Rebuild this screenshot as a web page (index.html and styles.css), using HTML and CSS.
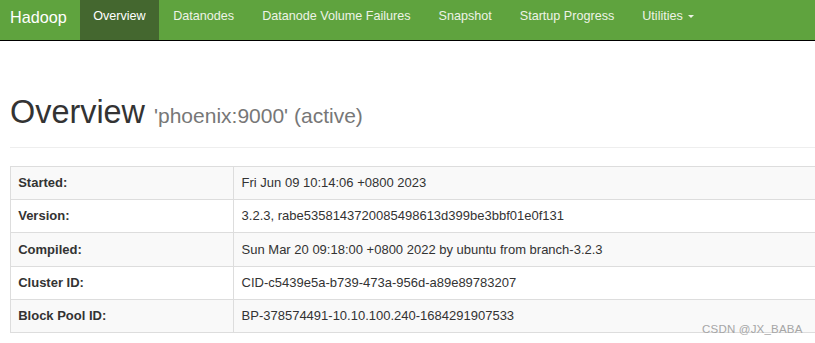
FILE: index.html
```html
<!DOCTYPE html>
<html lang="en">
<head>
    <meta charset="UTF-8">
    <title>Namenode information</title>
    <link rel="stylesheet" href="styles.css">
</head>
<body>
    <nav class="navbar">
        <a class="navbar-brand" href="#">Hadoop</a>
        <ul class="navbar-nav">
            <li class="active"><a href="#">Overview</a></li>
            <li><a href="#">Datanodes</a></li>
            <li><a href="#">Datanode Volume Failures</a></li>
            <li><a href="#">Snapshot</a></li>
            <li><a href="#">Startup Progress</a></li>
            <li><a href="#">Utilities <span class="caret"></span></a></li>
        </ul>
    </nav>

    <div class="container">
        <div class="page-header">
            <h1>Overview <small>'phoenix:9000' (active)</small></h1>
        </div>

        <table class="table">
            <tr><th>Started:</th><td>Fri Jun 09 10:14:06 +0800 2023</td></tr>
            <tr><th>Version:</th><td>3.2.3, rabe5358143720085498613d399be3bbf01e0f131</td></tr>
            <tr><th>Compiled:</th><td>Sun Mar 20 09:18:00 +0800 2022 by ubuntu from branch-3.2.3</td></tr>
            <tr><th>Cluster ID:</th><td>CID-c5439e5a-b739-473a-956d-a89e89783207</td></tr>
            <tr><th>Block Pool ID:</th><td>BP-378574491-10.10.100.240-1684291907533</td></tr>
        </table>
    </div>

    <div class="watermark">CSDN @JX_BABA</div>
</body>
</html>
```

FILE: styles.css
```css
body {
    margin: 0;
    font-family: 'Liberation Sans', Arial, sans-serif;
    font-size: 12.6px;
    line-height: 18px;
    color: #333;
    background: #fff;
    overflow: hidden;
}

a {
    text-decoration: none;
}

.navbar {
    display: flex;
    height: 40px;
    background: #5fa33e;
    border-bottom: 1px solid #000;
}

.navbar-brand {
    display: block;
    padding: 8px 13px 0 10px;
    font-size: 16.2px;
    line-height: 18px;
    color: #fff;
}

.navbar-nav {
    display: flex;
    margin: 0;
    padding: 0;
    list-style: none;
}

.navbar-nav li a {
    display: block;
    height: 40px;
    box-sizing: border-box;
    padding: 7px 14px 0;
    color: #eef3e6;
    white-space: nowrap;
}

.navbar-nav li.active a {
    padding: 7px 13.5px 0;
    background: #44672f;
    color: #fff;
}

.caret {
    display: inline-block;
    width: 0;
    height: 0;
    margin-left: 2px;
    vertical-align: middle;
    border-top: 3.6px solid #eef3e6;
    border-left: 3.6px solid transparent;
    border-right: 3.6px solid transparent;
}

.container {
    width: 900px;
    padding-left: 10px;
}

.page-header {
    margin: 54px 0 18px;
    padding-bottom: 4px;
    border-bottom: 1px solid #eee;
}

h1 {
    margin: 0 0 9px;
    font-size: 32.4px;
    line-height: 35.6px;
    font-weight: 500;
    color: #333;
}

h1 small {
    font-size: 21px;
    color: #777;
    font-weight: 400;
}

.table {
    width: 100%;
    border-collapse: collapse;
    border: 1px solid #ddd;
    font-size: 13px;
}

.table th,
.table td {
    padding: 7.2px;
    border: 1px solid #ddd;
    text-align: left;
    vertical-align: top;
    line-height: 18px;
    height: 18px;
}

.table th {
    width: 208px;
    font-weight: bold;
}

.table tr:nth-child(odd) {
    background: #f9f9f9;
}

.watermark {
    position: absolute;
    left: 702px;
    top: 320px;
    font-size: 11.5px;
    color: #a6a6a6;
    letter-spacing: 0.2px;
}
```
